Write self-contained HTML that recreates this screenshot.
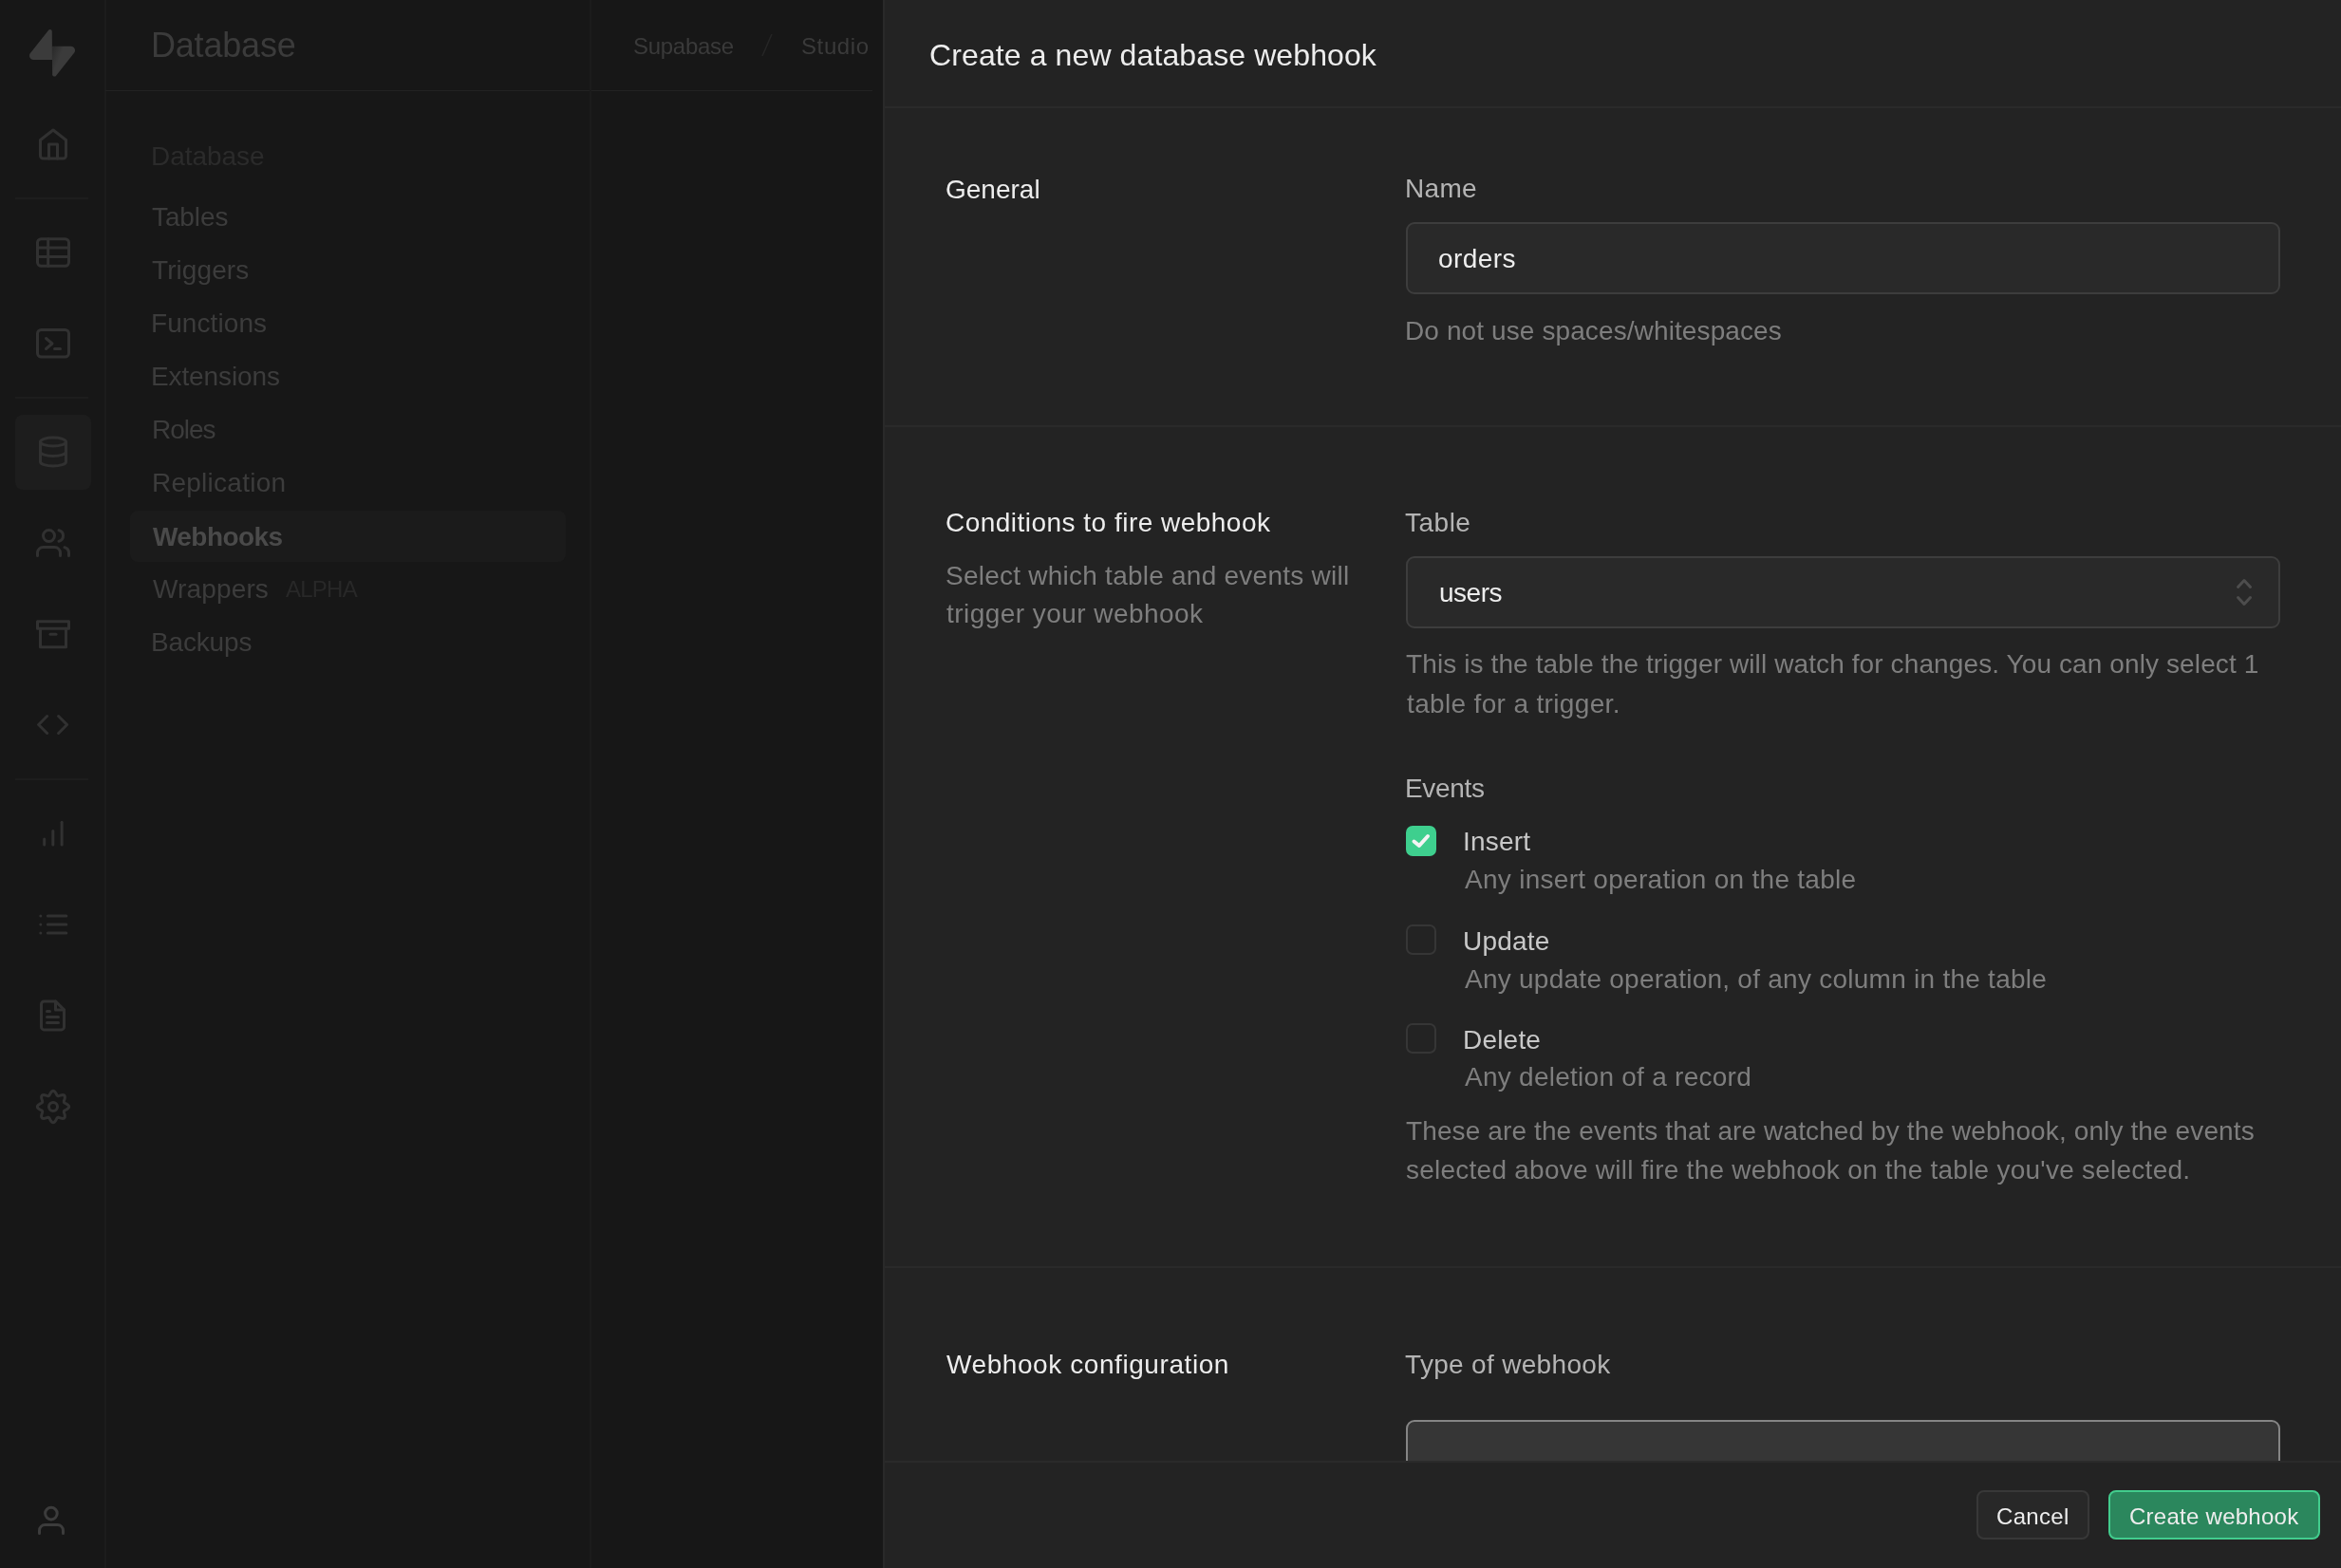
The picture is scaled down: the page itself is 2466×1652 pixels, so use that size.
<!DOCTYPE html>
<html><head><meta charset="utf-8"><title>Create a new database webhook</title>
<style>
html,body{margin:0;padding:0}
body{width:2466px;height:1652px;overflow:hidden;position:relative;background:#171717;font-family:"Liberation Sans",sans-serif}
.abs{position:absolute}
.t{position:absolute;white-space:nowrap;will-change:transform}
.box{position:absolute;box-sizing:border-box}
</style></head><body>
<!-- dimmed app shell -->
<div class="box" style="left:110px;top:0;width:2px;height:1652px;background:#1c1c1c"></div>
<div class="box" style="left:111px;top:95px;width:808px;height:1px;background:#222222"></div>
<div class="box" style="left:621px;top:0;width:2px;height:1652px;background:#1b1b1b"></div>
<div class="box" style="left:16px;top:208px;width:77px;height:2px;background:#1d1d1d"></div>
<div class="box" style="left:16px;top:418px;width:77px;height:2px;background:#1d1d1d"></div>
<div class="box" style="left:16px;top:820px;width:77px;height:2px;background:#1d1d1d"></div>
<div class="box" style="left:16px;top:437px;width:80px;height:79px;background:#1d1d1d;border-radius:8px"></div>
<div class="box" style="left:137px;top:538px;width:459px;height:54px;background:#1b1b1b;border-radius:8px"></div>
<div class="box" style="left:802px;top:36px;width:12px;height:23px;"><svg width="12" height="23"><line x1="11" y1="0" x2="1" y2="23" stroke="#262626" stroke-width="1.5"/></svg></div>
<svg class="abs" style="left:0;top:0" width="110" height="1652" viewBox="0 0 110 1652"><g transform="translate(38,134) scale(1.5)" fill="none" stroke="#313131" stroke-width="2" stroke-linecap="round" stroke-linejoin="round"><path d="M3 9l9-7 9 7v11a2 2 0 0 1-2 2H5a2 2 0 0 1-2-2z"/><polyline points="9 22 9 12 15 12 15 22"/></g><g fill="none" stroke="#313131" stroke-width="3" stroke-linecap="round" stroke-linejoin="round"><rect x="39.5" y="251.7" width="33" height="28.6" rx="4"/><line x1="39.5" y1="261" x2="72.5" y2="261"/><line x1="39.5" y1="270.5" x2="72.5" y2="270.5"/><line x1="50.7" y1="251.7" x2="50.7" y2="280.3"/></g><g fill="none" stroke="#313131" stroke-width="3" stroke-linecap="round" stroke-linejoin="round"><rect x="39.5" y="347.5" width="33" height="28.5" rx="4"/><polyline points="48.5,356.5 55,362 48.5,367.5"/><line x1="57.5" y1="367.5" x2="63.5" y2="367.5"/></g><g transform="translate(38,458) scale(1.5)" fill="none" stroke="#313131" stroke-width="2" stroke-linecap="round" stroke-linejoin="round"><ellipse cx="12" cy="5" rx="9" ry="3"/><path d="M21 12c0 1.66-4 3-9 3s-9-1.34-9-3"/><path d="M3 5v14c0 1.66 4 3 9 3s9-1.34 9-3V5"/></g><g transform="translate(38,554) scale(1.5)" fill="none" stroke="#313131" stroke-width="2" stroke-linecap="round" stroke-linejoin="round"><path d="M17 21v-2a4 4 0 0 0-4-4H5a4 4 0 0 0-4 4v2"/><circle cx="9" cy="7" r="4"/><path d="M23 21v-2a4 4 0 0 0-3-3.87"/><path d="M16 3.13a4 4 0 0 1 0 7.75"/></g><g transform="translate(38,650.3) scale(1.5)" fill="none" stroke="#313131" stroke-width="2" stroke-linecap="round" stroke-linejoin="round"><polyline points="21 8 21 21 3 21 3 8"/><rect x="1" y="3" width="22" height="5"/><line x1="10" y1="12" x2="14" y2="12"/></g><g transform="translate(37.6,745.5) scale(1.5)" fill="none" stroke="#313131" stroke-width="2" stroke-linecap="round" stroke-linejoin="round"><polyline points="16 18 22 12 16 6"/><polyline points="8 6 2 12 8 18"/></g><g fill="none" stroke="#313131" stroke-width="3" stroke-linecap="round" stroke-linejoin="round"><line x1="46.7" y1="884" x2="46.7" y2="890"/><line x1="55.8" y1="875.5" x2="55.8" y2="890"/><line x1="65.1" y1="866.2" x2="65.1" y2="890"/></g><g transform="translate(38.3,955.9) scale(1.5)" fill="none" stroke="#313131" stroke-width="2" stroke-linecap="round" stroke-linejoin="round"><line x1="8" y1="6" x2="21" y2="6"/><line x1="8" y1="12" x2="21" y2="12"/><line x1="8" y1="18" x2="21" y2="18"/><line x1="3" y1="6" x2="3.01" y2="6"/><line x1="3" y1="12" x2="3.01" y2="12"/><line x1="3" y1="18" x2="3.01" y2="18"/></g><g transform="translate(37.5,1051.9) scale(1.5)" fill="none" stroke="#313131" stroke-width="2" stroke-linecap="round" stroke-linejoin="round"><path d="M14 2H6a2 2 0 0 0-2 2v16a2 2 0 0 0 2 2h12a2 2 0 0 0 2-2V8z"/><polyline points="14 2 14 8 20 8"/><line x1="16" y1="13" x2="8" y2="13"/><line x1="16" y1="17" x2="8" y2="17"/><polyline points="10 9 9 9 8 9"/></g><g fill="none" stroke="#313131" stroke-width="3" stroke-linecap="round" stroke-linejoin="round"><polyline points="56.00,1149.30 57.07,1149.63 58.04,1150.53 58.83,1151.78 59.47,1153.06 60.05,1154.07 60.71,1154.64 61.57,1154.70 62.70,1154.40 64.06,1153.94 65.50,1153.62 66.82,1153.67 67.81,1154.19 68.33,1155.18 68.38,1156.50 68.06,1157.94 67.60,1159.30 67.30,1160.43 67.36,1161.29 67.93,1161.95 68.94,1162.53 70.22,1163.17 71.47,1163.96 72.37,1164.93 72.70,1166.00 72.37,1167.07 71.47,1168.04 70.22,1168.83 68.94,1169.47 67.93,1170.05 67.36,1170.71 67.30,1171.57 67.60,1172.70 68.06,1174.06 68.38,1175.50 68.33,1176.82 67.81,1177.81 66.82,1178.33 65.50,1178.38 64.06,1178.06 62.70,1177.60 61.57,1177.30 60.71,1177.36 60.05,1177.93 59.47,1178.94 58.83,1180.22 58.04,1181.47 57.07,1182.37 56.00,1182.70 54.93,1182.37 53.96,1181.47 53.17,1180.22 52.53,1178.94 51.95,1177.93 51.29,1177.36 50.43,1177.30 49.30,1177.60 47.94,1178.06 46.50,1178.38 45.18,1178.33 44.19,1177.81 43.67,1176.82 43.62,1175.50 43.94,1174.06 44.40,1172.70 44.70,1171.57 44.64,1170.71 44.07,1170.05 43.06,1169.47 41.78,1168.83 40.53,1168.04 39.63,1167.07 39.30,1166.00 39.63,1164.93 40.53,1163.96 41.78,1163.17 43.06,1162.53 44.07,1161.95 44.64,1161.29 44.70,1160.43 44.40,1159.30 43.94,1157.94 43.62,1156.50 43.67,1155.18 44.19,1154.19 45.18,1153.67 46.50,1153.62 47.94,1153.94 49.30,1154.40 50.43,1154.70 51.29,1154.64 51.95,1154.07 52.53,1153.06 53.17,1151.78 53.96,1150.53 54.93,1149.63 56.00,1149.30"/><circle cx="56" cy="1166" r="4.5"/></g><g fill="none" stroke="#3c3c3c" stroke-width="3" stroke-linecap="round" stroke-linejoin="round"><circle cx="53.9" cy="1594.6" r="6.3"/><path d="M41.5 1615.5v-3a6 6 0 0 1 6-6h13a6 6 0 0 1 6 6v3"/></g><defs><linearGradient id="lg" gradientUnits="userSpaceOnUse" x1="53.97" y1="54.97" x2="94.16" y2="71.83"><stop offset="0" stop-color="#2c2c2c"/><stop offset="0.5" stop-color="#3b3b3b"/></linearGradient></defs><g transform="translate(31,31) scale(0.4404,0.4425)" fill="#3b3b3b"><path fill="url(#lg)" d="M63.7076 110.284C60.8481 113.885 55.0502 111.912 54.9813 107.314L53.9738 40.0627L99.1935 40.0627C107.384 40.0627 111.952 49.5228 106.859 55.9374L63.7076 110.284Z"/><path d="M45.317 2.07103C48.1765 -1.53037 53.9745 0.442937 54.0434 5.041L54.4849 72.2922H9.83113C1.64038 72.2922 -2.92775 62.8321 2.1655 56.4175L45.317 2.07103Z"/></g></svg>
<!-- panel -->
<div class="box" style="left:930px;top:0;width:1536px;height:1652px;background:#232323;border-left:2px solid #292929"></div>
<div class="box" style="left:932px;top:112px;width:1534px;height:2px;background:#2a2a2a"></div>
<div class="box" style="left:932px;top:448px;width:1534px;height:2px;background:#2a2a2a"></div>
<div class="box" style="left:932px;top:1334px;width:1534px;height:2px;background:#2a2a2a"></div>
<div class="box" style="left:1481px;top:234px;width:921px;height:76px;background:#292929;border:2px solid #3d3d3d;border-radius:9px"></div>
<div class="box" style="left:1481px;top:586px;width:921px;height:76px;background:#292929;border:2px solid #3d3d3d;border-radius:9px"></div>
<svg class="abs" style="left:2350px;top:604px" width="28" height="40" viewBox="0 0 28 40"><g fill="none" stroke="#4d4d4d" stroke-width="3" stroke-linecap="round" stroke-linejoin="round"><polyline points="7.5,14.5 14,7.5 20.5,14.5"/><polyline points="7.5,25.5 14,32.5 20.5,25.5"/></g></svg>
<div class="box" style="left:1481px;top:870px;width:32px;height:32px;background:#3ecf8e;border-radius:7px"></div>
<svg class="abs" style="left:1481px;top:870px" width="32" height="32" viewBox="0 0 32 32"><polyline points="8.5,16.5 14,21 23,11" fill="none" stroke="#f4f4f4" stroke-width="4" stroke-linecap="round" stroke-linejoin="round"/></svg>
<div class="box" style="left:1481px;top:974px;width:32px;height:32px;background:#232323;border:2px solid #363636;border-radius:7px"></div>
<div class="box" style="left:1481px;top:1078px;width:32px;height:32px;background:#232323;border:2px solid #363636;border-radius:7px"></div>
<div class="box" style="left:1481px;top:1496px;width:921px;height:80px;background:#363636;border:2px solid #858585;border-radius:9px"></div>
<div class="box" style="left:932px;top:1539px;width:1534px;height:113px;background:#232323;border-top:2px solid #2a2a2a"></div>
<div class="box" style="left:2082px;top:1570px;width:119px;height:52px;background:#282828;border:2px solid #383838;border-radius:8px"></div>
<div class="box" style="left:2221px;top:1570px;width:223px;height:52px;background:#2b875d;border:2px solid #42cc8d;border-radius:8px"></div>
<div class="t" style="left:159.0px;top:30.2px;font-size:36px;line-height:36px;font-weight:400;letter-spacing:-0.200px;color:#3b3b3b">Database</div>
<div class="t" style="left:667.0px;top:36.8px;font-size:24px;line-height:24px;font-weight:400;letter-spacing:-0.286px;color:#3a3a3a">Supabase</div>
<div class="t" style="left:844.0px;top:36.8px;font-size:24px;line-height:24px;font-weight:400;letter-spacing:0.600px;color:#3a3a3a">Studio</div>
<div class="t" style="left:159.0px;top:151.0px;font-size:28px;line-height:28px;font-weight:400;letter-spacing:-0.029px;color:#2b2b2b">Database</div>
<div class="t" style="left:160.0px;top:215.0px;font-size:28px;line-height:28px;font-weight:400;letter-spacing:-0.100px;color:#3c3c3c">Tables</div>
<div class="t" style="left:160.0px;top:271.0px;font-size:28px;line-height:28px;font-weight:400;letter-spacing:0.086px;color:#3c3c3c">Triggers</div>
<div class="t" style="left:159.0px;top:327.0px;font-size:28px;line-height:28px;font-weight:400;letter-spacing:0.087px;color:#3c3c3c">Functions</div>
<div class="t" style="left:159.0px;top:383.0px;font-size:28px;line-height:28px;font-weight:400;letter-spacing:-0.111px;color:#3c3c3c">Extensions</div>
<div class="t" style="left:159.8px;top:439.0px;font-size:28px;line-height:28px;font-weight:400;letter-spacing:-1.025px;color:#3c3c3c">Roles</div>
<div class="t" style="left:159.8px;top:494.6px;font-size:28px;line-height:28px;font-weight:400;letter-spacing:0.250px;color:#3c3c3c">Replication</div>
<div class="t" style="left:161.0px;top:551.5px;font-size:28px;line-height:28px;font-weight:700;letter-spacing:-0.571px;color:#4a4a4a">Webhooks</div>
<div class="t" style="left:161.0px;top:607.0px;font-size:28px;line-height:28px;font-weight:400;letter-spacing:0.143px;color:#3c3c3c">Wrappers</div>
<div class="t" style="left:301.0px;top:609.4px;font-size:24px;line-height:24px;font-weight:400;letter-spacing:-0.750px;color:#282828">ALPHA</div>
<div class="t" style="left:159.0px;top:663.0px;font-size:28px;line-height:28px;font-weight:400;letter-spacing:-0.167px;color:#3c3c3c">Backups</div>
<div class="t" style="left:979.0px;top:41.6px;font-size:32px;line-height:32px;font-weight:400;letter-spacing:0.107px;color:#ededed">Create a new database webhook</div>
<div class="t" style="left:996.0px;top:185.5px;font-size:28px;line-height:28px;font-weight:400;letter-spacing:0.000px;color:#ededed">General</div>
<div class="t" style="left:1480.0px;top:185.4px;font-size:28px;line-height:28px;font-weight:400;letter-spacing:0.333px;color:#b4b4b4">Name</div>
<div class="t" style="left:1514.5px;top:259.0px;font-size:28px;line-height:28px;font-weight:400;letter-spacing:0.420px;color:#ededed">orders</div>
<div class="t" style="left:1480.0px;top:334.5px;font-size:28px;line-height:28px;font-weight:400;letter-spacing:0.107px;color:#7e7e7e">Do not use spaces/whitespaces</div>
<div class="t" style="left:996.0px;top:537.4px;font-size:28px;line-height:28px;font-weight:400;letter-spacing:0.480px;color:#ededed">Conditions to fire webhook</div>
<div class="t" style="left:996.0px;top:593.4px;font-size:28px;line-height:28px;font-weight:400;letter-spacing:0.242px;color:#7e7e7e">Select which table and events will</div>
<div class="t" style="left:997.0px;top:633.0px;font-size:28px;line-height:28px;font-weight:400;letter-spacing:0.453px;color:#7e7e7e">trigger your webhook</div>
<div class="t" style="left:1480.0px;top:537.0px;font-size:28px;line-height:28px;font-weight:400;letter-spacing:0.500px;color:#b4b4b4">Table</div>
<div class="t" style="left:1516.0px;top:610.6px;font-size:28px;line-height:28px;font-weight:400;letter-spacing:-0.500px;color:#ededed">users</div>
<div class="t" style="left:1481.0px;top:685.7px;font-size:28px;line-height:28px;font-weight:400;letter-spacing:0.108px;color:#7e7e7e">This is the table the trigger will watch for changes. You can only select 1</div>
<div class="t" style="left:1482.0px;top:728.0px;font-size:28px;line-height:28px;font-weight:400;letter-spacing:0.347px;color:#7e7e7e">table for a trigger.</div>
<div class="t" style="left:1480.0px;top:817.0px;font-size:28px;line-height:28px;font-weight:400;letter-spacing:-0.320px;color:#b4b4b4">Events</div>
<div class="t" style="left:1541.0px;top:873.0px;font-size:28px;line-height:28px;font-weight:400;letter-spacing:0.200px;color:#c8c8c8">Insert</div>
<div class="t" style="left:1543.0px;top:913.0px;font-size:28px;line-height:28px;font-weight:400;letter-spacing:0.281px;color:#7e7e7e">Any insert operation on the table</div>
<div class="t" style="left:1541.0px;top:977.5px;font-size:28px;line-height:28px;font-weight:400;letter-spacing:0.200px;color:#c8c8c8">Update</div>
<div class="t" style="left:1543.0px;top:1017.6px;font-size:28px;line-height:28px;font-weight:400;letter-spacing:0.255px;color:#7e7e7e">Any update operation, of any column in the table</div>
<div class="t" style="left:1541.0px;top:1081.5px;font-size:28px;line-height:28px;font-weight:400;letter-spacing:0.200px;color:#c8c8c8">Delete</div>
<div class="t" style="left:1543.0px;top:1121.0px;font-size:28px;line-height:28px;font-weight:400;letter-spacing:0.261px;color:#7e7e7e">Any deletion of a record</div>
<div class="t" style="left:1481.0px;top:1178.0px;font-size:28px;line-height:28px;font-weight:400;letter-spacing:0.118px;color:#7e7e7e">These are the events that are watched by the webhook, only the events</div>
<div class="t" style="left:1481.0px;top:1219.0px;font-size:28px;line-height:28px;font-weight:400;letter-spacing:0.246px;color:#7e7e7e">selected above will fire the webhook on the table you've selected.</div>
<div class="t" style="left:997.0px;top:1424.0px;font-size:28px;line-height:28px;font-weight:400;letter-spacing:0.575px;color:#ededed">Webhook configuration</div>
<div class="t" style="left:1480.0px;top:1424.0px;font-size:28px;line-height:28px;font-weight:400;letter-spacing:0.321px;color:#b4b4b4">Type of webhook</div>
<div class="t" style="left:2103.4px;top:1586.0px;font-size:24px;line-height:24px;font-weight:400;letter-spacing:0.320px;color:#ededed">Cancel</div>
<div class="t" style="left:2243.0px;top:1586.0px;font-size:24px;line-height:24px;font-weight:400;letter-spacing:0.262px;color:#ededed">Create webhook</div>
</body></html>
